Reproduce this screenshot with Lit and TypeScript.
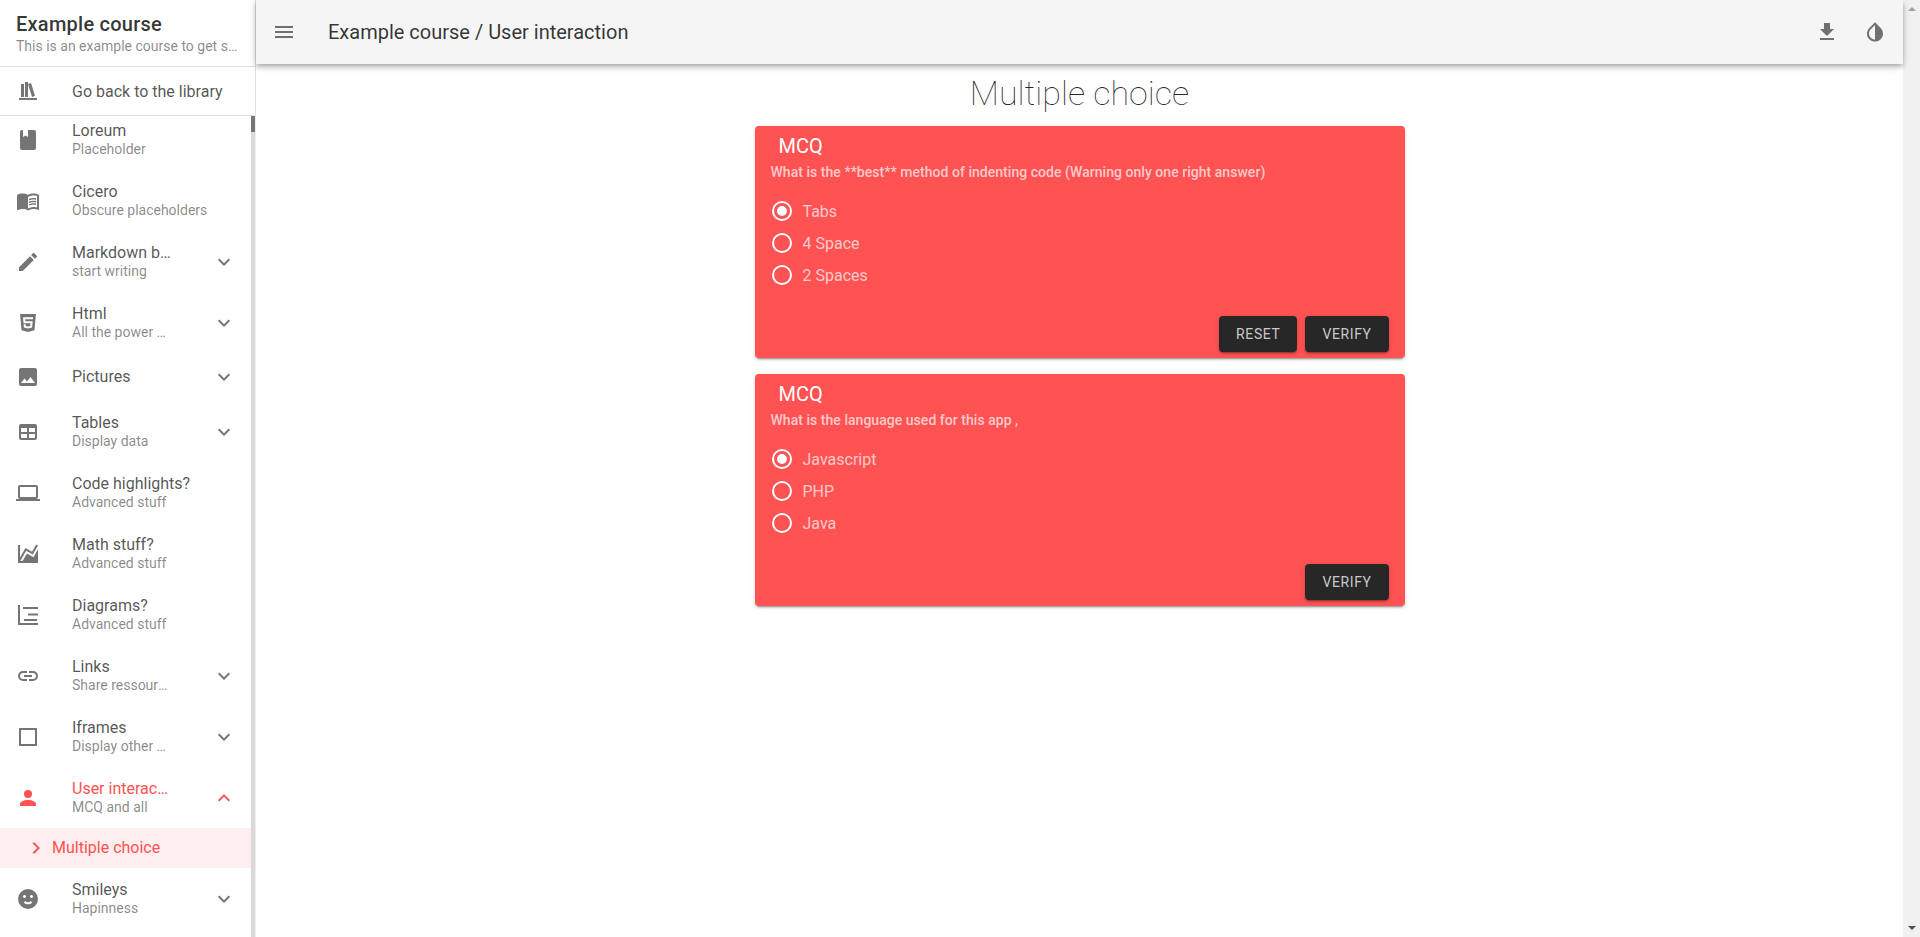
import { LitElement, html, css, svg } from "lit";
import { customElement } from "lit/decorators.js";

const P: Record<string, string> = {
  shelf: "M9 3V18H12V3H9M12 5L16 18L19 17L15 4L12 5M5 5V18H8V5H5M3 19V21H21V19H3Z",
  book: "M18,22A2,2 0 0,0 20,20V4C20,2.89 19.1,2 18,2H12V9L9.5,7.5L7,9V2H6A2,2 0 0,0 4,4V20A2,2 0 0,0 6,22H18Z",
  open: "M21,5C19.89,4.65 18.67,4.5 17.5,4.5C15.55,4.5 13.45,4.9 12,6C10.55,4.9 8.45,4.5 6.5,4.5C4.55,4.5 2.45,4.9 1,6V20.65C1,20.9 1.25,21.15 1.5,21.15C1.6,21.15 1.65,21.1 1.75,21.1C3.1,20.45 5.05,20 6.5,20C8.45,20 10.55,20.4 12,21.5C13.35,20.65 15.8,20 17.5,20C19.15,20 20.85,20.3 22.25,21.05C22.35,21.1 22.4,21.1 22.5,21.1C22.75,21.1 23,20.85 23,20.6V6C22.4,5.55 21.75,5.25 21,5M21,18.5C19.9,18.15 18.7,18 17.5,18C15.8,18 13.35,18.65 12,19.5V8C13.35,7.15 15.8,6.5 17.5,6.5C18.7,6.5 19.9,6.65 21,7V18.5ZM17.5,10.5C18.38,10.5 19.23,10.59 20,10.76V9.24C19.21,9.09 18.36,9 17.5,9C15.8,9 14.26,9.29 13,9.83V11.49C14.13,10.85 15.7,10.5 17.5,10.5M13,12.49V14.15C14.13,13.51 15.7,13.16 17.5,13.16C18.38,13.16 19.23,13.25 20,13.42V11.9C19.21,11.75 18.36,11.66 17.5,11.66C15.8,11.66 14.26,11.96 13,12.49M17.5,14.33C15.8,14.33 14.26,14.62 13,15.16V16.82C14.13,16.18 15.7,15.83 17.5,15.83C18.38,15.83 19.23,15.92 20,16.09V14.57C19.21,14.41 18.36,14.33 17.5,14.33Z",
  pencil: "M20.71,7.04C21.1,6.65 21.1,6 20.71,5.63L18.37,3.29C18,2.9 17.35,2.9 16.96,3.29L15.12,5.12L18.87,8.87M3,17.25V21H6.75L17.81,9.93L14.06,6.18L3,17.25Z",
  html5: "M12,17.56L16.07,16.43L16.62,10.33H9.38L9.2,8.3H16.8L17,6.31H7L7.56,12.32H14.45L14.22,14.9L12,15.5L9.78,14.9L9.64,13.24H7.64L7.93,16.43L12,17.56M4.07,3H19.93L18.5,19.2L12,21L5.5,19.2L4.07,3Z",
  image: "M8.5,13.5L11,16.5L14.5,12L19,18H5M21,19V5C21,3.89 20.1,3 19,3H5A2,2 0 0,0 3,5V19A2,2 0 0,0 5,21H19A2,2 0 0,0 21,19Z",
  table: "M5,4H19A2,2 0 0,1 21,6V18A2,2 0 0,1 19,20H5A2,2 0 0,1 3,18V6A2,2 0 0,1 5,4M5,8V12H11V8H5M13,8V12H19V8H13M5,14V18H11V14H5M13,14V18H19V14H13Z",
  laptop: "M4,6H20V16H4M20,18A2,2 0 0,0 22,16V6C22,4.89 21.1,4 20,4H4C2.89,4 2,4.89 2,6V16A2,2 0 0,0 4,18H0V20H24V18H20Z",
  chart: "M17.45,15.18L22,7.31V19L22,21H2V3H4V15.54L9.5,6L16,9.78L20.24,2.45L21.97,3.45L16.74,12.5L10.23,8.75L4.31,19H6.57L10.96,11.44L17.45,15.18Z",
  gantt: "M2 2H4V20H22V22H2V2ZM7 4H22V6H7V4ZM12 10.5H22V12.5H12V10.5ZM8 16H21V18H8V16Z",
  link: "M3.9,12C3.9,10.29 5.29,8.9 7,8.9H11V7H7A5,5 0 0,0 2,12A5,5 0 0,0 7,17H11V15.1H7C5.29,15.1 3.9,13.71 3.9,12M8,13H16V11H8V13M17,7H13V8.9H17C18.71,8.9 20.1,10.29 20.1,12C20.1,13.71 18.71,15.1 17,15.1H13V17H17A5,5 0 0,0 22,12A5,5 0 0,0 17,7Z",
  square: "M3 3V21H21V3H3M19 19H5V5H19V19Z",
  account: "M12,4A4,4 0 0,1 16,8A4,4 0 0,1 12,12A4,4 0 0,1 8,8A4,4 0 0,1 12,4M12,14C16.42,14 20,15.79 20,18V20H4V18C4,15.79 7.58,14 12,14Z",
  smile: "M12,2A10,10 0 0,0 2,12A10,10 0 0,0 12,22A10,10 0 0,0 22,12A10,10 0 0,0 12,2M7,9.5C7,8.7 7.7,8 8.5,8C9.3,8 10,8.7 10,9.5C10,10.3 9.3,11 8.5,11C7.7,11 7,10.3 7,9.5M12,17.23C10.25,17.23 8.71,16.5 7.81,15.42L9.23,14C9.68,14.72 10.75,15.23 12,15.23C13.25,15.23 14.32,14.72 14.77,14L16.19,15.42C15.29,16.5 13.75,17.23 12,17.23M15.5,11C14.7,11 14,10.3 14,9.5C14,8.7 14.7,8 15.5,8C16.3,8 17,8.7 17,9.5C17,10.3 16.3,11 15.5,11Z",
  down: "M7.41,8.58L12,13.17L16.59,8.58L18,10L12,16L6,10L7.41,8.58Z",
  up: "M7.41,15.41L12,10.83L16.59,15.41L18,14L12,8L6,14L7.41,15.41Z",
  right: "M8.59,16.58L13.17,12L8.59,7.41L10,6L16,12L10,18L8.59,16.58Z",
  menu: "M3,6H21V8H3V6M3,11H21V13H3V11M3,16H21V18H3V16Z",
  download: "M5,20H19V18H5M19,9H15V3H9V9H5L12,16L19,9Z",
  invert: "M12,19.58V19.58C10.4,19.58 8.89,18.96 7.76,17.83C6.62,16.69 6,15.19 6,13.58C6,12 6.62,10.47 7.76,9.34L12,5.1M17.66,7.93L12,2.27V2.27L6.34,7.93C3.22,11.05 3.22,16.12 6.34,19.24C7.9,20.8 9.95,21.58 12,21.58C14.05,21.58 16.1,20.8 17.66,19.24C20.78,16.12 20.78,11.05 17.66,7.93Z",
  on: "M12,20A8,8 0 0,1 4,12A8,8 0 0,1 12,4A8,8 0 0,1 20,12A8,8 0 0,1 12,20M12,2A10,10 0 0,0 2,12A10,10 0 0,0 12,22A10,10 0 0,0 22,12A10,10 0 0,0 12,2M12,7A5,5 0 0,0 7,12A5,5 0 0,0 12,17A5,5 0 0,0 17,12A5,5 0 0,0 12,7Z",
  off: "M12,20A8,8 0 0,1 4,12A8,8 0 0,1 12,4A8,8 0 0,1 20,12A8,8 0 0,1 12,20M12,2A10,10 0 0,0 2,12A10,10 0 0,0 12,22A10,10 0 0,0 22,12A10,10 0 0,0 12,2Z",
};

const icon = (n: string) => html`<svg class="ic" viewBox="0 0 24 24">${svg`<path d=${P[n]}></path>`}</svg>`;

interface Item { i: string; t: string; s?: string; c?: boolean; a?: boolean; }
const ITEMS: Item[] = [
  { i: "book", t: "Loreum", s: "Placeholder" },
  { i: "open", t: "Cicero", s: "Obscure placeholders" },
  { i: "pencil", t: "Markdown basics", s: "start writing", c: true },
  { i: "html5", t: "Html", s: "All the power of Html", c: true },
  { i: "image", t: "Pictures", c: true },
  { i: "table", t: "Tables", s: "Display data", c: true },
  { i: "laptop", t: "Code highlights?", s: "Advanced stuff" },
  { i: "chart", t: "Math stuff?", s: "Advanced stuff" },
  { i: "gantt", t: "Diagrams?", s: "Advanced stuff" },
  { i: "link", t: "Links", s: "Share ressources", c: true },
  { i: "square", t: "Iframes", s: "Display other websites", c: true },
  { i: "account", t: "User interaction", s: "MCQ and all", c: true, a: true },
];
const SMILEY: Item = { i: "smile", t: "Smileys", s: "Hapinness", c: true };

const QUESTIONS = [
  { q: "What is the **best** method of indenting code (Warning only one right answer)", o: ["Tabs", "4 Space", "2 Spaces"], reset: true },
  { q: "What is the language used for this app ,", o: ["Javascript", "PHP", "Java"], reset: false },
];

@customElement("app-root")
export class AppRoot extends LitElement {
  static styles = css`
    :host { display: flex; width: 1920px; height: 937px; overflow: hidden; background: #fff; font-family: Roboto, sans-serif; color: rgba(0,0,0,.87); }
    * { box-sizing: border-box; }
    .ic { width: 24px; height: 24px; flex: none; fill: currentColor; display: block; }
    .side { width: 256px; flex: none; display: flex; flex-direction: column; height: 937px; }
    .brand { height: 67px; flex: none; padding: 11px 16px 0 16px; border-bottom: 1px solid rgba(0,0,0,.12); border-right: 1px solid rgba(0,0,0,.12); }
    .brand-t { font-size: 20px; line-height: 26px; font-weight: 500; letter-spacing: .25px; white-space: nowrap; color: rgba(0,0,0,.8); }
    .brand-s { font-size: 14px; line-height: 18px; color: rgba(0,0,0,.48); white-space: nowrap; overflow: hidden; text-overflow: ellipsis; }
    .back { height: 49px; flex: none; display: flex; align-items: center; padding: 0 16px; border-bottom: 1px solid rgba(0,0,0,.12); border-right: 1px solid rgba(0,0,0,.12); color: rgba(0,0,0,.54); }
    .back span { margin-left: 32px; font-size: 16px; color: rgba(0,0,0,.68); white-space: nowrap; }
    .scroll { flex: 1; min-height: 0; display: flex; overflow: hidden; }
    .list { flex: 1; min-width: 0; margin-top: -7px; }
    .track { width: 5px; flex: none; background: #d9d9d9; border-right: 1px solid #eee; }
    .thumb { width: 4px; height: 16px; background: #757575; }
    .row { display: flex; align-items: center; height: 61px; padding: 0 15px 0 16px; color: rgba(0,0,0,.54); }
    .row.single { height: 48px; }
    .row.active { color: #ff5252; }
    .txt { margin-left: 32px; flex: 1; min-width: 0; }
    .row.single .txt { margin-top: -2px; }
    .t { font-size: 16px; line-height: 19px; color: rgba(0,0,0,.68); white-space: nowrap; overflow: hidden; text-overflow: ellipsis; }
    .s { font-size: 14px; line-height: 18px; color: rgba(0,0,0,.48); white-space: nowrap; overflow: hidden; text-overflow: ellipsis; }
    .row.nochev .t, .row.nochev .s { overflow: visible; }
    .chev { margin-left: 41px; }
    .row.active .t { color: #ff5252; }
    .sub { height: 40px; display: flex; align-items: center; background: #ffeeee; color: #ff5252; padding-left: 24px; font-size: 16px; }
    .sub span { margin: -2px 0 0 4px; }
    .main { flex: 1; min-width: 0; display: flex; flex-direction: column; }
    .bar { height: 64px; flex: none; background: #f5f5f5; display: flex; align-items: center; padding: 0 4px; box-shadow: 0 2px 4px -1px rgba(0,0,0,.2), 0 4px 5px 0 rgba(0,0,0,.14), 0 1px 10px 0 rgba(0,0,0,.12); position: relative; }
    .btn { width: 48px; height: 48px; display: flex; align-items: center; justify-content: center; color: rgba(0,0,0,.54); flex: none; }
    .crumb { font-size: 20px; margin-left: 20px; flex: 1; color: rgba(0,0,0,.8); }
    .content { flex: 1; display: flex; flex-direction: column; align-items: center; padding-top: 9px; }
    h1 { margin: 0 0 13px; font-size: 34px; font-weight: 100; line-height: 40px; color: rgba(0,0,0,.87); }
    .card { width: 650px; height: 232px; margin-bottom: 16px; background: #ff5252; border-radius: 4px; padding: 5px 13px 6px 16px; display: flex; flex-direction: column; box-shadow: 0 3px 1px -2px rgba(0,0,0,.2), 0 2px 2px 0 rgba(0,0,0,.14), 0 1px 5px 0 rgba(0,0,0,.12); }
    .ct { font-size: 20px; line-height: 31px; color: #fff; padding-left: 8px; }
    .cq { font-size: 14px; line-height: 20px; font-weight: 500; letter-spacing: .035px; color: rgba(255,255,255,.7); }
    .opts { margin-top: 13px; }
    .opt { height: 32px; display: flex; align-items: center; color: #fff; }
    .opt .ic { margin-left: -.5px; }
    .opt span { margin-left: 8.5px; font-size: 16px; color: rgba(255,255,255,.7); }
    .acts { margin-top: auto; display: flex; justify-content: flex-end; gap: 8px; padding-right: 3px; }
    .b { height: 36px; padding: 0 17px; background: #272727; color: rgba(255,255,255,.75); border-radius: 4px; font-size: 14px; letter-spacing: .6px; display: flex; align-items: center; box-shadow: 0 3px 1px -2px rgba(0,0,0,.2), 0 2px 2px 0 rgba(0,0,0,.14), 0 1px 5px 0 rgba(0,0,0,.12); }
    .sb { width: 17px; flex: none; background: #f1f1f1; display: flex; flex-direction: column; justify-content: space-between; align-items: center; padding: 7px 0; }
    .tri { width: 0; height: 0; border-left: 4px solid transparent; border-right: 4px solid transparent; }
    .tri.u { border-bottom: 4px solid #a3a3a3; }
    .tri.d { border-top: 4px solid #505050; }
  `;

  private row(it: Item) {
    return html`<div class="row ${it.s ? "" : "single"} ${it.a ? "active" : ""} ${it.c ? "" : "nochev"}">
      ${icon(it.i)}
      <div class="txt">
        <div class="t">${it.t}</div>
        ${it.s ? html`<div class="s">${it.s}</div>` : ""}
      </div>
      ${it.c ? html`<div class="chev">${icon(it.a ? "up" : "down")}</div>` : ""}
    </div>`;
  }

  render() {
    return html`
      <aside class="side">
        <div class="brand">
          <div class="brand-t">Example course</div>
          <div class="brand-s">This is an example course to get started</div>
        </div>
        <div class="back">${icon("shelf")}<span>Go back to the library</span></div>
        <div class="scroll">
          <div class="list">
            ${ITEMS.map((i) => this.row(i))}
            <div class="sub">${icon("right")}<span>Multiple choice</span></div>
            ${this.row(SMILEY)}
          </div>
          <div class="track"><div class="thumb"></div></div>
        </div>
      </aside>
      <div class="main">
        <header class="bar">
          <div class="btn">${icon("menu")}</div>
          <div class="crumb">Example course / User interaction</div>
          <div class="btn">${icon("download")}</div>
          <div class="btn">${icon("invert")}</div>
        </header>
        <main class="content">
          <h1>Multiple choice</h1>
          ${QUESTIONS.map((q) => html`<section class="card">
            <div class="ct">MCQ</div>
            <div class="cq">${q.q}</div>
            <div class="opts">
              ${q.o.map((o, n) => html`<div class="opt">${icon(n === 0 ? "on" : "off")}<span>${o}</span></div>`)}
            </div>
            <div class="acts">
              ${q.reset ? html`<div class="b">RESET</div>` : ""}
              <div class="b">VERIFY</div>
            </div>
          </section>`)}
        </main>
      </div>
      <div class="sb"><div class="tri u"></div><div class="tri d"></div></div>
    `;
  }
}
